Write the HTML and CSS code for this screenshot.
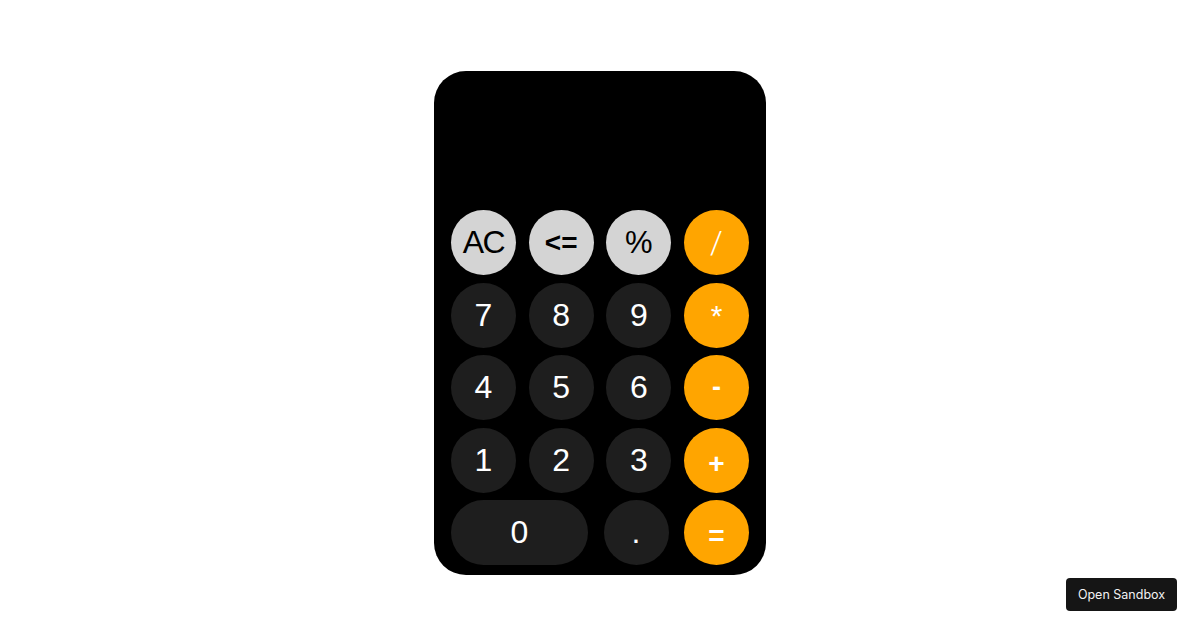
FILE: index.html
```html
<!DOCTYPE html>
<html>
<head>
<meta charset="utf-8">
<link rel="stylesheet" href="styles.css">
</head>
<body>
<div class="calculator">
  <div class="display"></div>
  <div class="keys">
    <div class="row">
      <button class="key light ac">AC</button>
      <button class="key light sym">&lt;=</button>
      <button class="key light pct">%</button>
      <button class="key orange slash">/</button>
    </div>
    <div class="row">
      <button class="key dark">7</button>
      <button class="key dark">8</button>
      <button class="key dark">9</button>
      <button class="key orange star">*</button>
    </div>
    <div class="row">
      <button class="key dark">4</button>
      <button class="key dark">5</button>
      <button class="key dark">6</button>
      <button class="key orange minus">-</button>
    </div>
    <div class="row">
      <button class="key dark">1</button>
      <button class="key dark">2</button>
      <button class="key dark">3</button>
      <button class="key orange sym low">+</button>
    </div>
    <div class="row">
      <button class="key dark wide">0</button>
      <button class="key dark">.</button>
      <button class="key orange sym low">=</button>
    </div>
  </div>
</div>
<a class="sandbox-btn">Open Sandbox</a>
</body>
</html>
```
FILE: styles.css
```css
html, body {
  margin: 0;
  padding: 0;
  background: #ffffff;
  font-family: "Liberation Sans", Arial, sans-serif;
}
.calculator {
  width: 332px;
  height: 504px;
  box-sizing: border-box;
  margin: 71px auto 0;
  background: #000000;
  border-radius: 32px;
  padding: 0 17px 10px;
  display: flex;
  flex-direction: column;
}
.display {
  height: 139px;
  flex: none;
}
.keys {
  display: flex;
  flex-direction: column;
  gap: 7.5px;
}
.row {
  display: flex;
  justify-content: space-between;
}
.key {
  width: 65px;
  height: 65px;
  border: none;
  border-radius: 50%;
  padding: 0;
  margin: 0;
  font-family: "Liberation Sans", Arial, sans-serif;
  font-size: 32px;
  line-height: 65px;
  text-align: center;
  color: #ffffff;
}
.key.wide {
  width: 137px;
  border-radius: 33px;
}
.key.ac {
  letter-spacing: -1.5px;
}
.key.sym {
  font-size: 28px;
  font-weight: bold;
}
.key.low {
  padding-top: 6px;
  line-height: 59px;
}
.key.pct {
  font-size: 31px;
}
.key.slash {
  font-family: Roboto, "Liberation Sans", sans-serif;
  font-weight: 300;
  font-size: 32px;
}
.key.star {
  font-size: 30px;
}
.key.minus {
  font-weight: bold;
  font-size: 27px;
}
.light {
  background: #d4d4d4;
  color: #000000;
}
.dark {
  background: #1e1e1e;
}
.orange {
  background: #ffa500;
}
.sandbox-btn {
  position: fixed;
  right: 23px;
  bottom: 19px;
  width: 111px;
  height: 33px;
  box-sizing: border-box;
  background: #151515;
  color: #f2f2f2;
  border-radius: 4px;
  font-family: Inter, "Liberation Sans", sans-serif;
  font-size: 12.5px;
  line-height: 33px;
  text-align: center;
}
```
